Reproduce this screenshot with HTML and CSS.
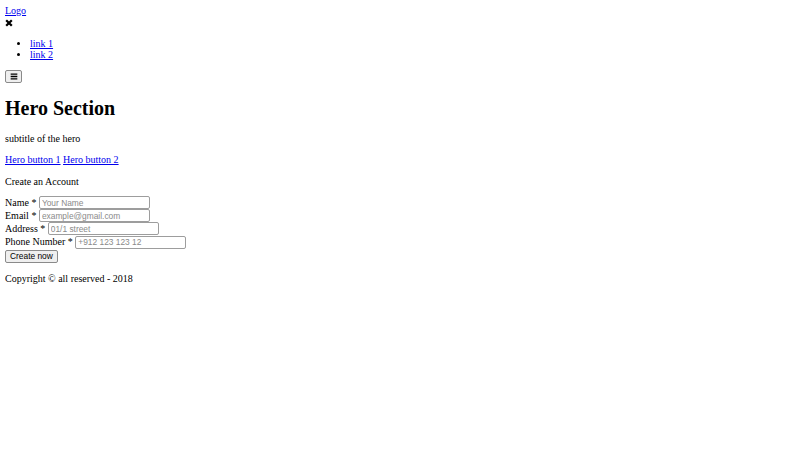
FILE: index.html
```html
<!DOCTYPE html>
<html>
<head>
<meta charset="utf-8">
<title>Hero</title>
<link rel="stylesheet" href="styles.css">
</head>
<body class="body">
<header class="header">
  <a class="logo" href="#">Logo</a>
  <div class="close"><svg class="close-icon" viewBox="0 0 10 10" width="8" height="8"><path d="M1.5 1.5 L8.5 8.5 M8.5 1.5 L1.5 8.5" stroke="#000" stroke-width="2.8"/></svg></div>
  <ul class="nav">
    <li><a href="#">link 1</a></li>
    <li><a href="#">link 2</a></li>
  </ul>
  <button class="menu-btn"><svg viewBox="0 0 12 10" width="8" height="7"><path d="M1 1.5H11M1 5H11M1 8.5H11" stroke="#000" stroke-width="1.9"/></svg></button>
</header>
<section class="hero">
  <h1 class="hero-title">Hero Section</h1>
  <p class="hero-sub">subtitle of the hero</p>
  <p class="hero-links"><a href="#">Hero button 1</a> <a href="#">Hero button 2</a></p>
</section>
<section class="signup">
  <p class="signup-title">Create an Account</p>
  <form class="form">
    <div class="row"><label class="field">Name * <input class="input" type="text" placeholder="Your Name"></label></div>
    <div class="row"><label class="field">Email * <input class="input" type="text" placeholder="example@gmail.com"></label></div>
    <div class="row"><label class="field">Address * <input class="input" type="text" placeholder="01/1 street"></label></div>
    <div class="row"><label class="field">Phone Number * <input class="input" type="text" placeholder="+912 123 123 12"></label></div>
    <button class="submit" type="button">Create now</button>
  </form>
</section>
<footer class="footer">
  <p class="copy">Copyright © all reserved - 2018</p>
</footer>
</body>
</html>
```
FILE: styles.css
```css
.body {
  margin: 5px;
  font-family: "Liberation Serif", "Times New Roman", serif;
  font-size: 10px;
  line-height: 11.5px;
  color: #000;
  background: #fff;
}
a {
  color: #0000ee;
}
.close {
  height: 11px;
  line-height: 11px;
}
.close-icon {
  display: inline-block;
  vertical-align: -1px;
}
.nav {
  margin: 10px 0 9px;
  padding-left: 25px;
}
.menu-btn {
  width: 17px;
  height: 13px;
  padding: 0;
  display: flex;
  align-items: center;
  justify-content: center;
  border: 1px solid #8a8a8a;
  border-radius: 2px;
  background: #efefef;
}
.hero-title {
  font-size: 20px;
  line-height: 23px;
  margin: 14px 0 13px;
  font-weight: bold;
}
.hero-sub,
.hero-links,
.copy {
  margin: 10px 0;
}
.signup-title {
  margin: 10px 0 9px;
}
.form {
  margin: 0;
}
.row {
  height: 13.2px;
  display: flex;
  align-items: center;
}
.field {
  display: flex;
  align-items: center;
  white-space: pre;
}
.input,
.submit {
  font-family: "Liberation Sans", Arial, sans-serif;
  font-size: 8.4px;
}
.input {
  box-sizing: border-box;
  width: 111px;
  height: 13px;
  padding: 0 2px;
  margin: 0;
  border: 1px solid #9d9d9d;
  border-radius: 2px;
  color: #000;
}
.input::placeholder {
  color: #8a8a8a;
}
.submit {
  margin-top: 1px;
  height: 13px;
  padding: 0 4px;
  border: 1px solid #8a8a8a;
  border-radius: 2px;
  background: #efefef;
  color: #000;
}
```
